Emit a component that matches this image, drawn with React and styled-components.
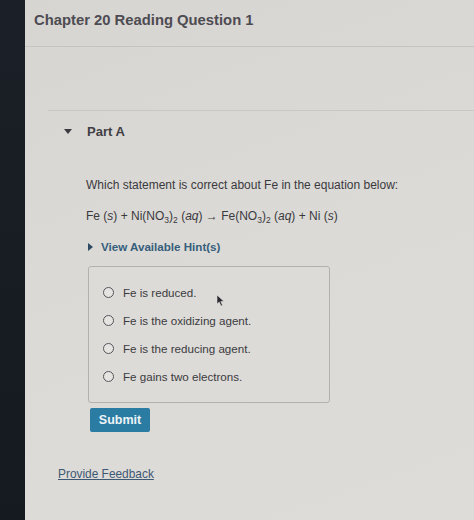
import React from "react";
import styled, { createGlobalStyle } from "styled-components";

const Global = createGlobalStyle`
  html, body { margin: 0; padding: 0; }
  body {
    background: #d9d7d2;
    font-family: "Liberation Sans", Arial, sans-serif;
  }
`;

const Page = styled.div`
  display: flex;
  width: 474px;
  height: 520px;
  overflow: hidden;
  background: linear-gradient(160deg, #d7d5d1 0%, #dcdad6 50%, #dedcd8 100%);
`;

const Sidebar = styled.div`
  width: 25px;
  flex: none;
  background: linear-gradient(180deg, #1b2028 0%, #151a20 100%);
`;

const Main = styled.div`
  flex: 1;
  display: flex;
  flex-direction: column;
  position: relative;
`;

const Header = styled.div`
  height: 47px;
  border-bottom: 1px solid #c6c4bf;
  padding-left: 9px;
  display: flex;
  align-items: flex-start;
  padding-top: 12px;
  box-sizing: border-box;
`;

const Title = styled.h1`
  margin: 0;
  font-size: 14.8px;
  font-weight: bold;
  color: #4d4b52;
`;

const Spacer = styled.div`
  height: 63px;
  margin-left: 23px;
  border-bottom: 1px solid #c9c7c2;
`;

const PartHeader = styled.div`
  display: flex;
  align-items: center;
  margin-top: 13px;
  height: 14px;
  padding-left: 39px;
  gap: 15px;
`;

const Caret = styled.span`
  width: 0;
  height: 0;
  border-left: 4px solid transparent;
  border-right: 4px solid transparent;
  border-top: 5px solid #3b3a40;
`;

const PartTitle = styled.span`
  font-size: 13px;
  font-weight: bold;
  color: #3f3e44;
`;

const Body = styled.div`
  padding-left: 61px;
  display: flex;
  flex-direction: column;
`;

const Question = styled.p`
  margin: 40px 0 0;
  font-size: 12px;
  color: #3a393e;
`;

const Equation = styled.p`
  margin: 17px 0 0;
  font-size: 12px;
  color: #3a393e;
  i { font-style: italic; }
  sub { font-size: 8.5px; vertical-align: -3px; line-height: 0; }
`;

const Hint = styled.div`
  display: flex;
  align-items: center;
  gap: 8px;
  margin-top: 17px;
  padding-left: 2px;
`;

const HintCaret = styled.span`
  width: 0;
  height: 0;
  border-top: 4px solid transparent;
  border-bottom: 4px solid transparent;
  border-left: 5px solid #2f4b63;
`;

const HintText = styled.span`
  font-size: 11.6px;
  font-weight: bold;
  color: #365e7c;
`;

const Choices = styled.div`
  margin-top: 13px;
  margin-left: 2px;
  width: 242px;
  height: 137px;
  box-sizing: border-box;
  border: 1px solid #b3b1ac;
  border-radius: 3px;
  background: #dddbd7;
  display: flex;
  flex-direction: column;
  padding: 18px 0 0 14px;
  gap: 14.3px;
`;

const Choice = styled.label`
  display: flex;
  align-items: center;
  gap: 9px;
  height: 14px;
  font-size: 11.6px;
  color: #3b3a3f;
`;

const Radio = styled.span`
  width: 9px;
  height: 9px;
  border-radius: 50%;
  border: 1.3px solid #55545a;
  background: #e6e4e0;
  flex: none;
`;

const Submit = styled.button`
  margin-top: 5px;
  margin-left: 4px;
  align-self: flex-start;
  width: 60px;
  height: 24px;
  border: none;
  border-radius: 2px;
  background: #2a7ca3;
  color: #eef4f7;
  font-family: "Liberation Sans", Arial, sans-serif;
  font-size: 12.5px;
  font-weight: bold;
  padding: 0;
`;

const Feedback = styled.a`
  margin: 35px 0 0 33px;
  font-size: 11.9px;
  color: #3e5874;
  text-decoration: underline;
  align-self: flex-start;
`;

const Cursor = styled.svg`
  position: absolute;
  left: 191px;
  top: 294px;
`;

const choices = [
  "Fe is reduced.",
  "Fe is the oxidizing agent.",
  "Fe is the reducing agent.",
  "Fe gains two electrons.",
];

export default function App() {
  return (
    <>
      <Global />
      <Page>
        <Sidebar />
        <Main>
          <Header>
            <Title>Chapter 20 Reading Question 1</Title>
          </Header>
          <Spacer />
          <PartHeader>
            <Caret />
            <PartTitle>Part A</PartTitle>
          </PartHeader>
          <Body>
            <Question>Which statement is correct about Fe in the equation below:</Question>
            <Equation>
              Fe (<i>s</i>) + Ni(NO<sub>3</sub>)<sub>2</sub> (<i>aq</i>) → Fe(NO<sub>3</sub>)<sub>2</sub> (<i>aq</i>) + Ni (<i>s</i>)
            </Equation>
            <Hint>
              <HintCaret />
              <HintText>View Available Hint(s)</HintText>
            </Hint>
            <Choices>
              {choices.map((c) => (
                <Choice key={c}>
                  <Radio />
                  {c}
                </Choice>
              ))}
            </Choices>
            <Submit>Submit</Submit>
          </Body>
          <Feedback href="#">Provide Feedback</Feedback>
          <Cursor width="9" height="13" viewBox="0 0 9 13">
            <path d="M1 1 L1 10 L3.2 8 L5 12 L6.5 11.3 L4.8 7.5 L8 7.5 Z" fill="#2a2a2e" stroke="#ddd" strokeWidth="0.6" />
          </Cursor>
        </Main>
      </Page>
    </>
  );
}
